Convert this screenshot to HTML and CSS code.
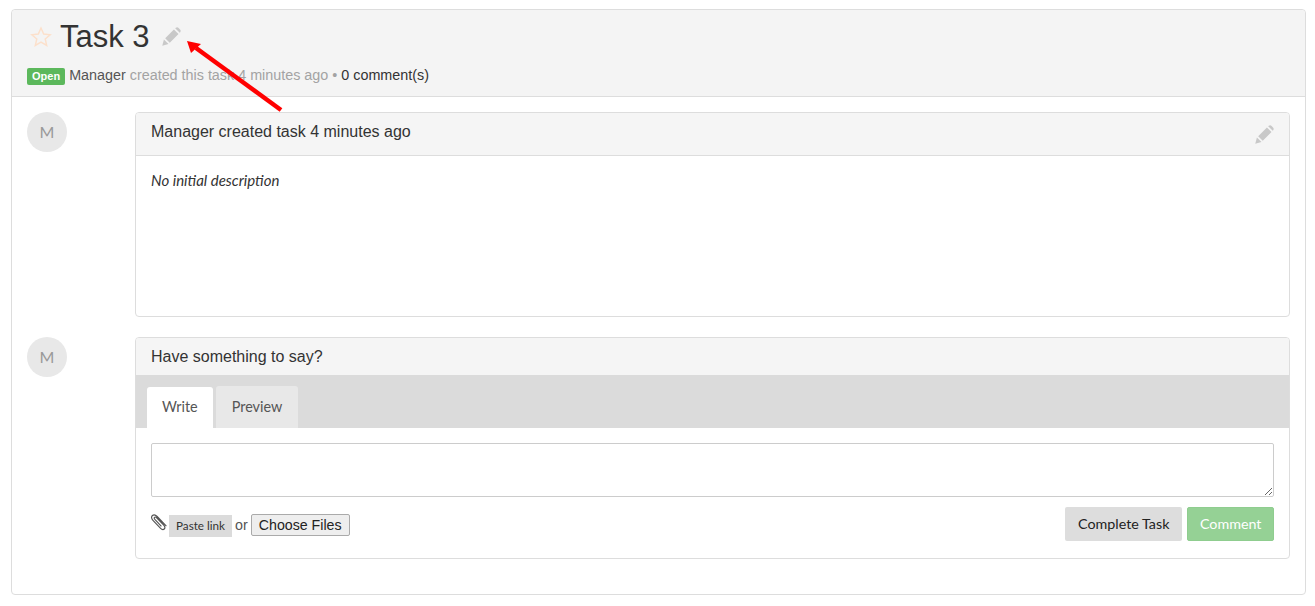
FILE: index.html
```html
<!DOCTYPE html>
<html lang="en">
<head>
  <meta charset="UTF-8">
  <title>Task 3</title>
  <link rel="stylesheet" href="styles.css">
</head>
<body>
  <div class="task">
    <header class="task-head">
      <div class="title-row">
        <svg class="star" viewBox="0 0 24 24"><path d="M12 2.2l2.9 6.6 7.1.7-5.4 4.7 1.6 7-6.2-3.7-6.2 3.7 1.6-7L2 9.500l7.100-.7z"/></svg>
        <h1>Task 3</h1>
        <svg class="pencil pencil-title" viewBox="0 0 24 24"><path d="M1.500 22.500l2-7.500 5.500 5.500zM5 13.500L15.500 3l5.500 5.500L10.500 19zM17 1.500l.8-.6q1.700-1 3 0l2.300 2.300q1 1.300 0 3l-.6.800z"/></svg>
      </div>
      <div class="meta">
        <span class="badge">Open</span>
        <a class="author">Manager</a>
        <span class="muted">created this task 4 minutes ago</span>
        <span class="muted dot">•</span>
        <a class="count">0 comment(s)</a>
      </div>
    </header>

    <div class="task-body">
      <div class="row">
        <div class="avatar">M</div>
        <section class="panel">
          <div class="panel-head panel-head-tall">
            <span>Manager created task 4 minutes ago</span>
            <svg class="pencil" viewBox="0 0 24 24"><path d="M1.500 22.500l2-7.500 5.500 5.500zM5 13.500L15.500 3l5.500 5.500L10.500 19zM17 1.500l.8-.6q1.700-1 3 0l2.300 2.300q1 1.300 0 3l-.6.800z"/></svg>
          </div>
          <div class="description"><em>No initial description</em></div>
        </section>
      </div>

      <div class="row">
        <div class="avatar">M</div>
        <section class="panel">
          <div class="panel-head">Have something to say?</div>
          <div class="tabs">
            <div class="tab tab-active">Write</div>
            <div class="tab">Preview</div>
          </div>
          <div class="editor">
            <textarea class="comment-box"></textarea>
            <div class="actions">
              <div class="attach">
                <svg class="clip" viewBox="0 0 18 18"><path d="M15.500 12.500L6.800 3.300C5.300 1.700 3.500 1.300 2.300 2.400 1 3.600 1.300 5.300 2.800 6.900l7 7.400c1.200 1.300 2.700 1.800 3.700.9 1-.9.700-2.400-.5-3.700L6.300 4.500C5.600 3.800 4.800 3.600 4.300 4.100c-.5.500-.4 1.200.3 2l6.200 6.600"/></svg>
                <span class="paste">Paste link</span>
                <span class="or">or</span>
                <button class="file-btn" type="button">Choose Files</button>
              </div>
              <div class="buttons">
                <button class="btn btn-grey" type="button">Complete Task</button>
                <button class="btn btn-green" type="button">Comment</button>
              </div>
            </div>
          </div>
        </section>
      </div>
    </div>
  </div>

  <!-- annotation drawn on top of the screenshot -->
  <svg class="arrow" width="300" height="120" viewBox="0 0 300 120">
    <line x1="281" y1="110" x2="196" y2="48"/>
    <polygon points="187,41 201,44 191,53"/>
  </svg>
</body>
</html>
```

FILE: styles.css
```css
html, body {
  height: 606px;
  overflow: hidden;
}
body {
  margin: 0;
  background: #fff;
  font-family: "Liberation Sans", Arial, sans-serif;
  font-size: 14px;
  color: #333;
}
.task {
  margin: 9px 9px 0 11px;
  border: 1px solid #ddd;
  border-radius: 4px;
}
.task-head {
  height: 87px;
  box-sizing: border-box;
  padding: 9px 15px 0;
  background: #f4f4f4;
  border-bottom: 1px solid #ddd;
  border-radius: 4px 4px 0 0;
}
.title-row {
  display: flex;
  align-items: center;
  height: 36px;
}
.title-row h1 {
  margin: 0 11px 0 8px;
  font-size: 31px;
  font-weight: normal;
  line-height: 36px;
}
.star {
  width: 22px;
  height: 22px;
  margin-left: 3px;
  fill: none;
  stroke: #fce0cb;
  stroke-width: 1.600;
}
.pencil {
  width: 20px;
  height: 20px;
  fill: #c8c8c8;
}
.pencil-title {
  margin-top: -1px;
}
.meta {
  display: flex;
  align-items: center;
  gap: 4px;
  margin-top: 10px;
  height: 20px;
  font-size: 14.350px;
}
.badge {
  margin-top: 2px;
  padding: 1px 5px;
  background: #5cb85c;
  border-radius: 2px;
  color: #fff;
  font-size: 11px;
  font-weight: bold;
  line-height: 15px;
}
.author {
  color: #555;
}
.muted {
  color: #a3a3a3;
}
.count {
  color: #333;
}
.task-body {
  display: flex;
  flex-direction: column;
  gap: 20px;
  padding: 15px 15px 35px;
}
.row {
  display: flex;
  align-items: flex-start;
  gap: 68px;
}
.avatar {
  flex: none;
  width: 40px;
  height: 40px;
  border-radius: 50%;
  background: #e8e8e8;
  color: #999;
  font-family: Lato, sans-serif;
  font-size: 16px;
  line-height: 40px;
  text-align: center;
}
.panel {
  flex: 1;
  border: 1px solid #ddd;
  border-radius: 4px;
  overflow: hidden;
}
.panel-head {
  display: flex;
  align-items: center;
  justify-content: space-between;
  height: 37px;
  padding: 0 15px;
  background: #f5f5f5;
  font-size: 16px;
}
.panel-head-tall {
  height: 38px;
  padding-bottom: 4px;
  border-bottom: 1px solid #ddd;
}
.panel-head-tall .pencil {
  margin-top: 5px;
}
.description {
  height: 160px;
  box-sizing: border-box;
  padding: 15px 15px 0;
  font-family: Lato, sans-serif;
  font-size: 15px;
}
.tabs {
  display: flex;
  align-items: flex-end;
  gap: 3px;
  height: 53px;
  padding-left: 11px;
  background: #dbdbdb;
}
.tab {
  height: 42px;
  padding: 0 16px;
  background: #e8e8e8;
  border-radius: 3px 3px 0 0;
  color: #555;
  font-family: Lato, sans-serif;
  font-size: 14.400px;
  line-height: 42px;
}
.tab-active {
  height: 41px;
  padding: 0 15px;
  background: #fff;
  line-height: 40px;
}
.editor {
  padding: 15px 15px 17px;
}
.comment-box {
  display: block;
  width: 100%;
  height: 54px;
  box-sizing: border-box;
  border: 1px solid #ccc;
  border-radius: 2px;
}
.actions {
  display: flex;
  justify-content: space-between;
  margin-top: 10px;
}
.attach {
  display: flex;
  align-items: flex-start;
}
.clip {
  width: 19px;
  height: 19px;
  margin-top: 6px;
  margin-left: -1px;
  fill: none;
  stroke: #555;
  stroke-width: 1.100;
}
.paste {
  margin-top: 8px;
  padding: 0 7px 1px;
  background: #dbdbdb;
  font-family: Lato, sans-serif;
  font-size: 11.700px;
  line-height: 21px;
}
.or {
  margin: 10px 3px 0;
  color: #555;
  font-size: 14.300px;
}
.file-btn {
  height: 22px;
  margin-top: 7px;
  padding: 0 7px;
  background: #eee;
  border: 1px solid #aaa;
  border-radius: 2px;
  color: #222;
  font-family: "Liberation Sans", Arial, sans-serif;
  font-size: 14.200px;
}
.buttons {
  display: flex;
  gap: 5px;
}
.btn {
  height: 34px;
  padding: 0 12px 2px;
  border: 1px solid transparent;
  border-radius: 2px;
  font-family: Lato, sans-serif;
  font-size: 14.300px;
}
.btn-grey {
  background: #ddd;
  color: #222;
}
.btn-green {
  padding: 0 11.500px 2px;
  background: #95d195;
  border-color: #8fcd8f;
  color: #fff;
}
.arrow {
  position: absolute;
  top: 0;
  left: 0;
}
.arrow line {
  stroke: #f00;
  stroke-width: 4.500;
}
.arrow polygon {
  fill: #f00;
}
```
